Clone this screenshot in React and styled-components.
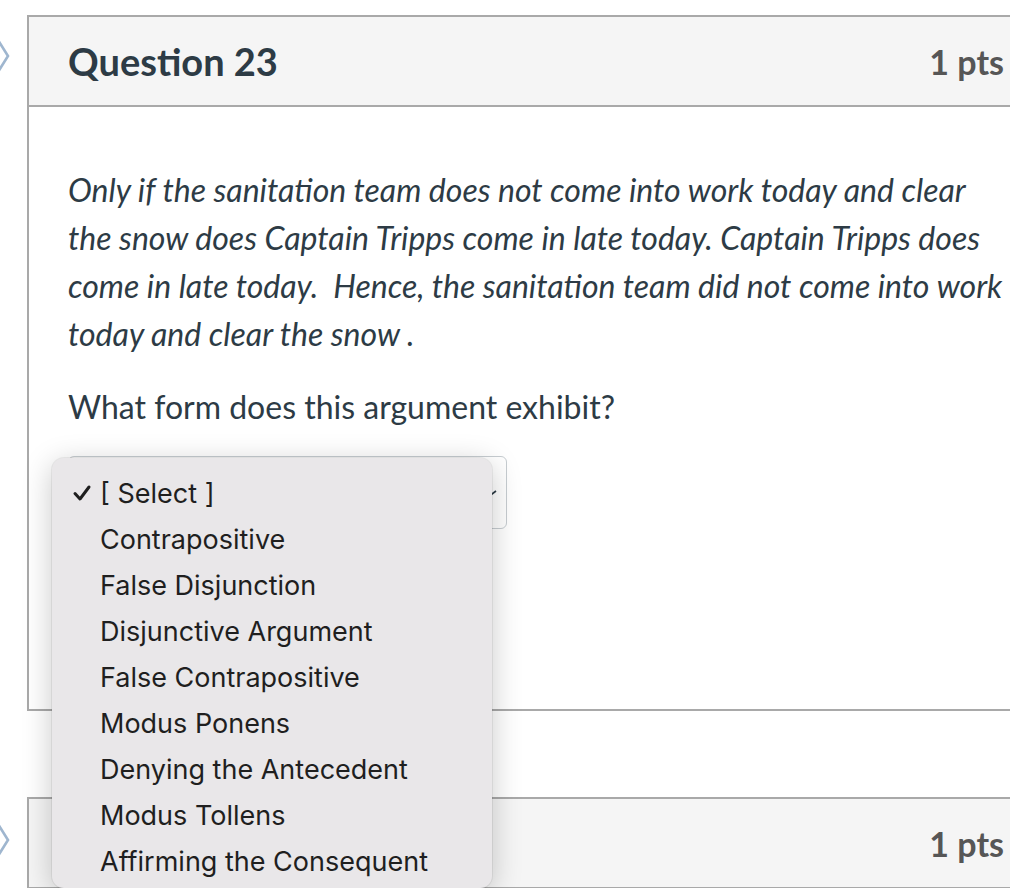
import React from 'react';
import styled, { createGlobalStyle } from 'styled-components';

const GlobalStyle = createGlobalStyle`
  html, body {
    margin: 0;
    padding: 0;
    background: #fff;
    overflow: hidden;
  }
  body {
    font-family: Lato, "Open Sans", sans-serif;
  }
`;

const Page = styled.div`
  height: 888px;
  overflow: hidden;
  padding-top: 15px;
  box-sizing: border-box;
  display: flex;
  flex-direction: column;
  gap: 86px;
`;

const QuestionRow = styled.div`
  display: flex;
  align-items: flex-start;
`;

const Gutter = styled.div`
  width: 27px;
  flex: 0 0 27px;
  display: flex;
  padding-top: ${(p) => p.offset}px;
`;

const Panel = styled.section`
  flex: 0 0 1020px;
  border: 2px solid #a9a9a9;
  border-right: none;
  box-sizing: border-box;
`;

const Header = styled.header`
  height: 88px;
  background: #f5f5f5;
  border-bottom: ${(p) => (p.last ? 'none' : '2px solid #a9a9a9')};
  display: flex;
  align-items: center;
  justify-content: space-between;
  padding: 0 43px 0 39px;
`;

const Title = styled.h2`
  margin: 0;
  font-family: Lato, sans-serif;
  font-weight: 700;
  font-size: 38px;
  color: #2d3b45;
`;

const Points = styled.span`
  font-family: Lato, sans-serif;
  font-weight: 700;
  font-size: 34px;
  color: #565656;
`;

const Body = styled.div`
  height: 602px;
  box-sizing: border-box;
  padding: 59px 43px 0 39px;
  color: #2d3b45;
`;

const Prompt = styled.p`
  margin: 0 0 25px;
  font-size: 32px;
  line-height: 48px;
  font-style: ${(p) => (p.italic ? 'italic' : 'normal')};
  white-space: pre-wrap;
`;

const SelectWrap = styled.div`
  position: relative;
  margin-top: 22px;
  width: 439px;
`;

const SelectBox = styled.div`
  height: 73px;
  border: 1.5px solid #c7cdd1;
  border-radius: 6px;
  box-sizing: border-box;
  display: flex;
  align-items: center;
  justify-content: flex-end;
  padding-right: 8px;
`;

const Menu = styled.ul`
  position: absolute;
  left: -16px;
  top: 2px;
  width: 440px;
  margin: 0;
  padding: 12px 0 4px;
  list-style: none;
  background: #e9e7e9;
  border-radius: 12px;
  box-shadow: 0 6px 30px rgba(0, 0, 0, 0.22), 0 0 0 1px rgba(0, 0, 0, 0.06);
  box-sizing: border-box;
`;

const Option = styled.li`
  display: flex;
  align-items: center;
  height: 46px;
  font-family: Inter, "Liberation Sans", sans-serif;
  font-size: 27px;
  color: #1f1f1f;
`;

const Check = styled.span`
  width: 48px;
  flex: 0 0 48px;
  display: flex;
  justify-content: flex-end;
  padding-right: 8px;
  box-sizing: border-box;
`;

const options = [
  '[ Select ]',
  'Contrapositive',
  'False Disjunction',
  'Disjunctive Argument',
  'False Contrapositive',
  'Modus Ponens',
  'Denying the Antecedent',
  'Modus Tollens',
  'Affirming the Consequent',
];

const Flag = () => (
  <svg width="12" height="34" viewBox="0 0 12 34">
    <polyline points="-2,1 8,17 -2,33" fill="none" stroke="#9fb6cf" strokeWidth="2.6" />
  </svg>
);

const App = () => {
  return (
    <>
      <GlobalStyle />
      <Page>
        <QuestionRow>
          <Gutter offset={24}>
            <Flag />
          </Gutter>
          <Panel>
            <Header>
              <Title>Question 23</Title>
              <Points>1 pts</Points>
            </Header>
            <Body>
              <Prompt italic>
                Only if the sanitation team does not come into work today and clear the snow does Captain Tripps come in late today. Captain Tripps does come in late today.  Hence, the sanitation team did not come into work today and clear the snow .
              </Prompt>
              <Prompt>What form does this argument exhibit?</Prompt>
              <SelectWrap>
                <SelectBox>
                  <svg width="12" height="12" viewBox="0 0 12 12">
                    <path d="M2 10 L10 4" stroke="#2d3b45" strokeWidth="1.6" fill="none" />
                  </svg>
                </SelectBox>
                <Menu>
                  {options.map((o, i) => (
                    <Option key={o}>
                      <Check>
                        {i === 0 && (
                          <svg width="20" height="18" viewBox="0 0 20 18">
                            <path d="M3 9.5 L8 15 L17 3" stroke="#1f1f1f" strokeWidth="3" fill="none" strokeLinecap="round" strokeLinejoin="round" />
                          </svg>
                        )}
                      </Check>
                      {o}
                    </Option>
                  ))}
                </Menu>
              </SelectWrap>
            </Body>
          </Panel>
        </QuestionRow>
        <QuestionRow>
          <Gutter offset={26}>
            <Flag />
          </Gutter>
          <Panel>
            <Header last>
              <Title />
              <Points>1 pts</Points>
            </Header>
          </Panel>
        </QuestionRow>
      </Page>
    </>
  );
};

export default App;
